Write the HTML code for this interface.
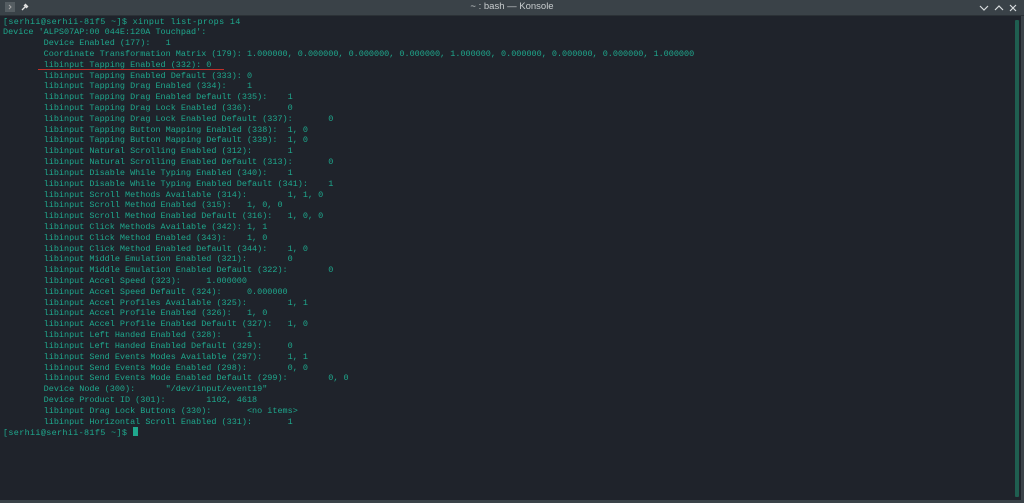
<!DOCTYPE html>
<html><head><meta charset="utf-8"><style>
html,body{margin:0;padding:0;width:1024px;height:503px;overflow:hidden;background:#1f232b;}
#tb{position:absolute;left:0;top:0;width:1024px;height:15px;background:#3a4248;border-bottom:1px solid #2b3136;}
#title{position:absolute;left:0;width:1024px;top:1px;text-align:center;font:9.5px "Liberation Sans",sans-serif;color:#c8ccce;}
pre{position:absolute;left:3px;top:16.5px;margin:0;font:8.47px/10.82px "Liberation Mono",monospace;color:#1fa88d;tab-size:8;-moz-tab-size:8;white-space:pre;}
.p{letter-spacing:0.32px;}
.cur{display:inline-block;width:5px;height:9px;background:#1fa88d;vertical-align:-1px;}
#ul{position:absolute;left:38px;top:69px;width:186px;height:1px;background:#c0302a;}
#sb{position:absolute;left:1015px;top:20px;width:4px;height:477px;background:#1f5e50;border-radius:1px;}
#bb{position:absolute;left:0;top:500px;width:1024px;height:3px;background:#3a4248;}
#rb{position:absolute;left:1021px;top:16px;width:3px;height:487px;background:#3a4248;}
</style></head><body>
<div id="tb">
<svg style="position:absolute;left:5px;top:2px" width="10" height="10"><rect x="0" y="0" width="10" height="10" fill="#555d62"/><path d="M4 3l2 2-2 2" stroke="#aaa" fill="none" stroke-width="1"/></svg>
<svg style="position:absolute;left:20px;top:2px" width="10" height="10"><path d="M2 8l3-3M4 3l3 3M5 2l3 3" stroke="#e0e0e0" stroke-width="1.4" fill="none"/></svg>
<div id="title">~ : bash — Konsole</div>
<svg style="position:absolute;left:979px;top:3px" width="44" height="10"><path d="M1 3l4 4 4-4" stroke="#d8dcde" fill="none" stroke-width="1.2"/><path d="M16 7l4-4 4 4" stroke="#d8dcde" fill="none" stroke-width="1.2"/><path d="M31 2l6 6M37 2l-6 6" stroke="#d8dcde" fill="none" stroke-width="1.2"/></svg>
</div>
<pre><span class="p">[serhii@serhii-81f5 ~]$ xinput list-props 14</span>
Device 'ALPS07AP:00 044E:120A Touchpad':
	Device Enabled (177):	1
	Coordinate Transformation Matrix (179):	1.000000, 0.000000, 0.000000, 0.000000, 1.000000, 0.000000, 0.000000, 0.000000, 1.000000
	libinput Tapping Enabled (332):	0
	libinput Tapping Enabled Default (333):	0
	libinput Tapping Drag Enabled (334):	1
	libinput Tapping Drag Enabled Default (335):	1
	libinput Tapping Drag Lock Enabled (336):	0
	libinput Tapping Drag Lock Enabled Default (337):	0
	libinput Tapping Button Mapping Enabled (338):	1, 0
	libinput Tapping Button Mapping Default (339):	1, 0
	libinput Natural Scrolling Enabled (312):	1
	libinput Natural Scrolling Enabled Default (313):	0
	libinput Disable While Typing Enabled (340):	1
	libinput Disable While Typing Enabled Default (341):	1
	libinput Scroll Methods Available (314):	1, 1, 0
	libinput Scroll Method Enabled (315):	1, 0, 0
	libinput Scroll Method Enabled Default (316):	1, 0, 0
	libinput Click Methods Available (342):	1, 1
	libinput Click Method Enabled (343):	1, 0
	libinput Click Method Enabled Default (344):	1, 0
	libinput Middle Emulation Enabled (321):	0
	libinput Middle Emulation Enabled Default (322):	0
	libinput Accel Speed (323):	1.000000
	libinput Accel Speed Default (324):	0.000000
	libinput Accel Profiles Available (325):	1, 1
	libinput Accel Profile Enabled (326):	1, 0
	libinput Accel Profile Enabled Default (327):	1, 0
	libinput Left Handed Enabled (328):	1
	libinput Left Handed Enabled Default (329):	0
	libinput Send Events Modes Available (297):	1, 1
	libinput Send Events Mode Enabled (298):	0, 0
	libinput Send Events Mode Enabled Default (299):	0, 0
	Device Node (300):	"/dev/input/event19"
	Device Product ID (301):	1102, 4618
	libinput Drag Lock Buttons (330):	&lt;no items&gt;
	libinput Horizontal Scroll Enabled (331):	1
<span class="p">[serhii@serhii-81f5 ~]$ </span><span class="cur"></span></pre>
<div id="ul"></div>
<div id="sb"></div>
<div id="rb"></div>
<div id="bb"></div>
</body></html>
